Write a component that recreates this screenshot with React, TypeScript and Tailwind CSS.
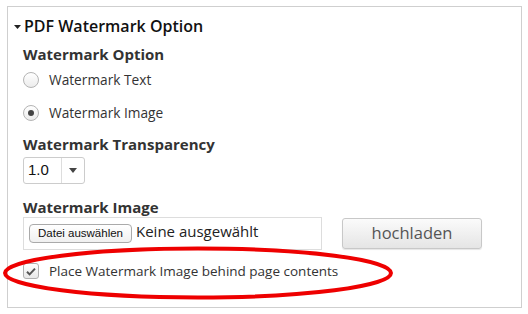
import React, { useState } from 'react'

const sans = { fontFamily: '"Open Sans", "Liberation Sans", sans-serif' }
const arial = { fontFamily: '"Liberation Sans", Arial, sans-serif' }

function Radio({ checked }: { checked: boolean }) {
  return (
    <span className="flex h-[16px] w-[16px] items-center justify-center rounded-full border border-[#b4b4b4] bg-gradient-to-b from-white to-[#ececec]">
      {checked && <span className="h-[6px] w-[6px] rounded-full bg-[#444]" />}
    </span>
  )
}

export default function App() {
  const [option, setOption] = useState<'text' | 'image'>('image')

  return (
    <div className="relative h-[314px] w-[528px] bg-white text-[#333]" style={sans}>
      <div className="absolute left-[7px] top-[6px] h-[302px] w-[515px] border border-[#cfcfcf]">
        {/* Titel */}
        <div className="flex h-[36px] items-center pl-[6px] pt-[1px]">
          <svg width="7" height="4" viewBox="0 0 7 4" className="mr-[3px] mt-[2px]">
            <path d="M0 0h7L3.5 4z" fill="#222" />
          </svg>
          <span className="text-[16px] font-semibold text-[#111]">PDF Watermark Option</span>
        </div>

        <div className="pl-[15px]">
          <div className="flex h-[22px] items-center text-[15px] font-bold">Watermark Option</div>

          <label className="flex h-[30px] items-center gap-[10px] text-[13.7px]" onClick={() => setOption('text')}>
            <Radio checked={option === 'text'} />
            <span>Watermark Text</span>
          </label>
          <label className="flex h-[36px] items-center gap-[10px] text-[13.7px]" onClick={() => setOption('image')}>
            <Radio checked={option === 'image'} />
            <span>Watermark Image</span>
          </label>

          <div className="flex h-[26px] items-center text-[15px] font-bold">Watermark Transparency</div>
          <div className="flex h-[27px] w-[62px] items-stretch rounded-[3px] border border-[#ccc] bg-white" style={arial}>
            <span className="flex w-[37px] items-center pl-[4px] text-[15px] text-[#111]">1.0</span>
            <span className="flex flex-1 items-center justify-center border-l border-[#ddd]">
              <svg width="8" height="5" viewBox="0 0 8 5">
                <path d="M0 0h8L4 5z" fill="#444" />
              </svg>
            </span>
          </div>

          <div className="flex h-[33px] items-end text-[15px] font-bold leading-[20px]">Watermark Image</div>
          <div className="flex items-center">
            <div className="flex h-[33px] w-[299px] items-center border border-[#ddd] pl-[5px]">
              <span
                className="flex h-[19px] w-[103px] items-center justify-center rounded-[4px] border border-[#aaa] bg-gradient-to-b from-white to-[#f0f0f0] text-[11.5px] text-[#111]"
                style={arial}
              >
                Datei auswählen
              </span>
              <span className="ml-[4px] -mt-[4px] text-[15px] text-[#222]">Keine ausgewählt</span>
            </div>
            <button className="ml-[20px] flex h-[31px] w-[140px] items-center justify-center rounded-[3px] border border-[#c8c8c8] bg-gradient-to-b from-[#fbfbfb] to-[#e5e5e5] text-[16.5px] text-[#555] shadow-[0_1px_1px_rgba(0,0,0,0.1)]">
              hochladen
            </button>
          </div>

          <label className="mt-[12px] flex h-[18px] items-center gap-[10px] text-[13.5px]">
            <span className="flex h-[16px] w-[16px] items-center justify-center rounded-[3px] border border-[#b0b0b0] bg-gradient-to-b from-white to-[#e8e8e8]">
              <svg width="10" height="9" viewBox="0 0 10 9">
                <path d="M1 4.8l2.6 2.6L9 1.6" fill="none" stroke="#555" strokeWidth="2" />
              </svg>
            </span>
            <span>Place Watermark Image behind page contents</span>
          </label>
        </div>
      </div>

      {/* rote Markierung */}
      <svg className="pointer-events-none absolute left-0 top-0" width="528" height="314">
        <ellipse cx="198" cy="273" rx="193" ry="24.5" fill="none" stroke="#ee0000" strokeWidth="4" />
      </svg>
    </div>
  )
}
